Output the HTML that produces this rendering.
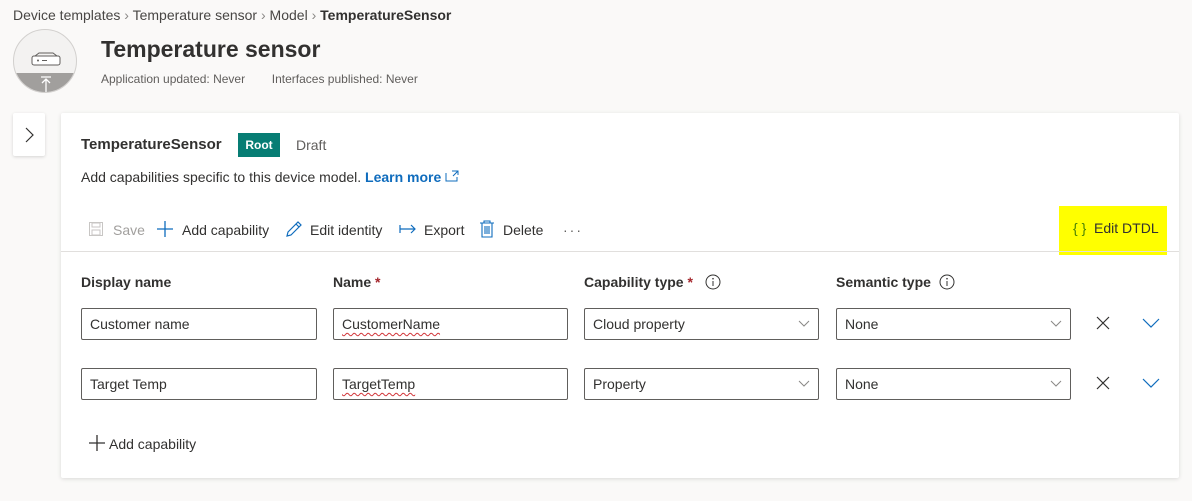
<!DOCTYPE html>
<html><head><style>
*{box-sizing:border-box;margin:0;padding:0}
body{width:1192px;height:501px;background:#faf9f8;font-family:"Liberation Sans",sans-serif;color:#323130;position:relative;overflow:hidden}
.a{position:absolute;white-space:nowrap}
.inp{position:absolute;height:32px;border:1px solid #605e5c;border-radius:2px;background:#fff;font-size:14px;padding:0 0 0 8px;line-height:30px}
.sq{text-decoration:underline wavy #d13438;text-decoration-thickness:1px;text-underline-offset:3px}
.hd{position:absolute;font-size:14px;font-weight:bold;top:274px}
.chev{position:absolute;right:8px;top:11px}
.tb{position:absolute;top:221px;font-size:14px;line-height:18px}
</style></head><body>
<div class="a" style="left:13px;top:7px;font-size:14px;color:#484644">Device templates <span style="color:#8a8886">&#x203A;</span> Temperature sensor <span style="color:#8a8886">&#x203A;</span> Model <span style="color:#8a8886">&#x203A;</span> <b style="color:#323130">TemperatureSensor</b></div>
<div class="a" style="left:13px;top:29px;width:64px;height:64px;border-radius:50%;background:#f3f2f1;border:1px solid #d2d0ce;overflow:hidden">
 <div style="position:absolute;left:0;right:0;top:43px;bottom:0;background:#a19f9d"></div>
 <svg style="position:absolute;left:17px;top:22px" width="30" height="14"><rect x="1" y="4" width="28" height="9" rx="2" fill="#fff" stroke="#605e5c"/><path d="M4 4 L8 1 H22 L26 4" fill="none" stroke="#605e5c"/><circle cx="7" cy="8.5" r="1" fill="#605e5c"/><path d="M11 8.5H16" stroke="#605e5c"/></svg>
 <svg style="position:absolute;left:25px;top:45px" width="14" height="18"><path d="M2 2H12M7 4V17M3 8L7 4L11 8" fill="none" stroke="#fff" stroke-width="1.3"/></svg>
</div>
<div class="a" style="left:101px;top:36px;font-size:23px;font-weight:bold">Temperature sensor</div>
<div class="a" style="left:101px;top:72px;font-size:12px;color:#605e5c">Application updated: Never&nbsp;&nbsp;&nbsp;&nbsp;&nbsp;&nbsp;&nbsp;&nbsp;Interfaces published: Never</div>
<div class="a" style="left:13px;top:113px;width:32px;height:43px;background:#fff;border-radius:2px;box-shadow:0 1px 3px rgba(0,0,0,.15)"><svg style="position:absolute;left:10px;top:13px" width="12" height="18"><path d="M3 2L10 9L3 16" fill="none" stroke="#323130" stroke-width="1.2"/></svg></div>
<div class="a" style="left:61px;top:113px;width:1118px;height:365px;background:#fff;border-radius:2px;box-shadow:0 1px 4px rgba(0,0,0,.13)"></div>
<div class="a" style="left:81px;top:136px;font-size:15px;font-weight:bold">TemperatureSensor</div>
<div class="a" style="left:238px;top:133px;width:42px;height:24px;background:#077d74;color:#fff;font-size:12px;font-weight:bold;text-align:center;line-height:24px">Root</div>
<div class="a" style="left:296px;top:137px;font-size:14px;color:#605e5c">Draft</div>
<div class="a" style="left:81px;top:169px;font-size:14px">Add capabilities specific to this device model. <span style="color:#0f6cbd;font-weight:bold">Learn more</span> <svg width="14" height="12"><path d="M1 3V11H12V7M7 1H13V5M13 1L8 6" fill="none" stroke="#0f6cbd"/></svg></div>
<div class="a" style="left:1059px;top:206px;width:108px;height:49px;background:#ffff00"></div>
<svg class="a" style="left:88px;top:221px" width="16" height="16"><rect x="1.5" y="1.5" width="13" height="13" fill="none" stroke="#c8c6c4"/><rect x="4" y="2" width="8" height="4" fill="none" stroke="#c8c6c4"/><rect x="4" y="9" width="8" height="5" fill="none" stroke="#c8c6c4"/></svg>
<div class="tb" style="left:113px;color:#a19f9d">Save</div>
<svg class="a" style="left:156px;top:220px" width="18" height="18"><path d="M9 1V17M1 9H17" stroke="#0f6cbd" stroke-width="1.3"/></svg>
<div class="tb" style="left:182px">Add capability</div>
<svg class="a" style="left:285px;top:220px" width="18" height="18"><path d="M2 16L3 12L13 2L16 5L6 15Z M11 4L14 7" fill="none" stroke="#0f6cbd" stroke-width="1.2"/></svg>
<div class="tb" style="left:310px">Edit identity</div>
<svg class="a" style="left:399px;top:222px" width="18" height="14"><path d="M1 3V11M1 7H16M12 3L16 7L12 11" fill="none" stroke="#0f6cbd" stroke-width="1.2"/></svg>
<div class="tb" style="left:424px">Export</div>
<svg class="a" style="left:479px;top:220px" width="16" height="18"><path d="M1 3H15M5 3V1H11V3M3 3V17H13V3M6 6V14M8 6V14M10 6V14" fill="none" stroke="#0f6cbd" stroke-width="1.1"/></svg>
<div class="tb" style="left:503px">Delete</div>
<div class="tb" style="left:563px;color:#605e5c;letter-spacing:2px">···</div>
<div class="a" style="left:1073px;top:220px;font-size:14px"><span style="color:#498205">{ }</span>&nbsp; Edit DTDL</div>
<div class="a" style="left:61px;top:251px;width:1118px;height:1px;background:#e1dfdd"></div>
<div class="hd" style="left:81px">Display name</div>
<div class="hd" style="left:333px">Name <span style="color:#a4262c">*</span></div>
<div class="hd" style="left:584px">Capability type <span style="color:#a4262c">*</span> <svg width="16" height="16" style="vertical-align:-3px;margin-left:8px"><circle cx="8" cy="8" r="7" fill="none" stroke="#323130"/><path d="M8 7V12" stroke="#323130"/><circle cx="8" cy="4.7" r=".8" fill="#323130"/></svg></div>
<div class="hd" style="left:836px">Semantic type <svg width="16" height="16" style="vertical-align:-3px;margin-left:4px"><circle cx="8" cy="8" r="7" fill="none" stroke="#323130"/><path d="M8 7V12" stroke="#323130"/><circle cx="8" cy="4.7" r=".8" fill="#323130"/></svg></div>

<div class="inp" style="left:81px;top:308px;width:236px">Customer name</div>
<div class="inp" style="left:333px;top:308px;width:235px"><span class="sq">CustomerName</span></div>
<div class="inp" style="left:584px;top:308px;width:235px">Cloud property<svg class="chev" width="12" height="8"><path d="M1 1L6 6L11 1" fill="none" stroke="#8a8886"/></svg></div>
<div class="inp" style="left:836px;top:308px;width:235px">None<svg class="chev" width="12" height="8"><path d="M1 1L6 6L11 1" fill="none" stroke="#8a8886"/></svg></div>
<svg class="a" style="left:1096px;top:316px" width="14" height="14"><path d="M1 1L13 13M13 1L1 13" stroke="#323130" stroke-width="1.2"/></svg>
<svg class="a" style="left:1142px;top:318px" width="18" height="10"><path d="M1 1L9 9L17 1" fill="none" stroke="#0f6cbd" stroke-width="1.2"/></svg>

<div class="inp" style="left:81px;top:368px;width:236px">Target Temp</div>
<div class="inp" style="left:333px;top:368px;width:235px"><span class="sq">TargetTemp</span></div>
<div class="inp" style="left:584px;top:368px;width:235px">Property<svg class="chev" width="12" height="8"><path d="M1 1L6 6L11 1" fill="none" stroke="#8a8886"/></svg></div>
<div class="inp" style="left:836px;top:368px;width:235px">None<svg class="chev" width="12" height="8"><path d="M1 1L6 6L11 1" fill="none" stroke="#8a8886"/></svg></div>
<svg class="a" style="left:1096px;top:376px" width="14" height="14"><path d="M1 1L13 13M13 1L1 13" stroke="#323130" stroke-width="1.2"/></svg>
<svg class="a" style="left:1142px;top:378px" width="18" height="10"><path d="M1 1L9 9L17 1" fill="none" stroke="#0f6cbd" stroke-width="1.2"/></svg>

<svg class="a" style="left:89px;top:435px" width="16" height="16"><path d="M8 0V16M0 8H16" stroke="#323130" stroke-width="1.3"/></svg>
<div class="a" style="left:109px;top:435px;font-size:14px;line-height:18px">Add capability</div>
</body></html>
